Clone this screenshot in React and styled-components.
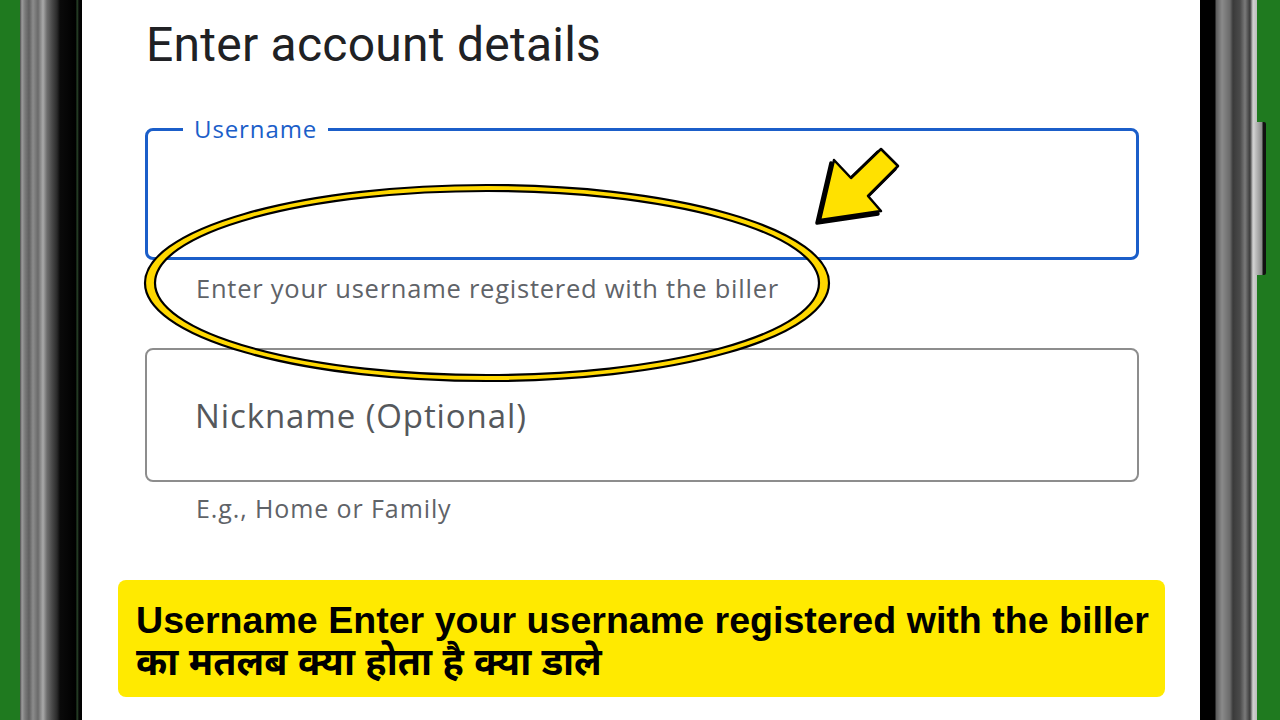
import React from 'react';
import styled, { createGlobalStyle } from 'styled-components';

const GlobalStyle = createGlobalStyle`
  html, body {
    margin: 0;
    padding: 0;
    width: 1280px;
    height: 720px;
    overflow: hidden;
    background: #1f7a1f;
  }
  #root { height: 720px; }
  * { box-sizing: border-box; }
`;

const headFont = `Roboto, "Noto Sans", Arial, sans-serif`;
const bodyFont = `"Open Sans", "Noto Sans", Arial, sans-serif`;

const Stage = styled.div`
  display: flex;
  height: 720px;
  padding-left: 20px;
  background: #1f7a1f;
`;

const LeftBezel = styled.div`
  flex: none;
  width: 62px;
  background: linear-gradient(
    to right,
    #4d4d4d 0px,
    #9c9c9c 2px,
    #7a7a7a 5px,
    #5f5f5f 9px,
    #8c8c8c 13px,
    #6a6a6a 18px,
    #a9a9a9 23px,
    #6d6d6d 27px,
    #4a4a4a 32px,
    #2a2a2a 37px,
    #0a0a0a 40px,
    #000 56px,
    #2c4a2c 57px,
    #050505 59px,
    #000 62px
  );
`;

const RightBezel = styled.div`
  position: relative;
  flex: none;
  width: 57px;
  background: linear-gradient(
    to right,
    #000 0px,
    #000 15px,
    #5a5a5a 16px,
    #8a8a8a 22px,
    #6a6a6a 30px,
    #3a3a3a 33px,
    #4a4a4a 40px,
    #7a7a7a 45px,
    #3a3a3a 50px,
    #d2d2d2 53px,
    #bdbdbd 57px
  );
`;

const SideButton = styled.div`
  position: absolute;
  left: calc(100% - 2px);
  top: 122px;
  width: 11px;
  height: 153px;
  border-radius: 0 2px 2px 0;
  background: linear-gradient(to right, #c4c4c4 0, #8a8a8a 7px, #111 8px, #111 11px);
`;

const Screen = styled.main`
  position: relative;
  flex: none;
  width: 1118px;
  height: 720px;
  background: #fff;
  padding: 0 35px 0 36px;
  display: flex;
  flex-direction: column;
`;

const Form = styled.section`
  display: flex;
  flex-direction: column;
  padding: 0 26px 0 27px;
`;

const Heading = styled.h1`
  margin: 0;
  padding: 17px 0 0 1px;
  font-family: ${headFont};
  font-weight: 400;
  font-size: 48px;
  line-height: 56px;
  letter-spacing: 0.25px;
  color: #202124;
`;

const Field = styled.fieldset`
  margin: ${(p) => p.$top}px 0 0 0;
  min-width: 0;
  padding: 0 0 0 35px;
  border: ${(p) => (p.$focused ? '3px solid #1b5ec9' : '2px solid #8d8d8d')};
  border-radius: 8px;
`;

const Legend = styled.legend`
  padding: 0 11px;
  font-family: ${bodyFont};
  font-size: 24px;
  line-height: 24px;
  letter-spacing: 0.9px;
  color: #1b5ec9;
`;

const InputArea = styled.div`
  height: ${(p) => p.$h}px;
  display: flex;
  align-items: center;
  padding-left: ${(p) => p.$indent}px;
  font-family: ${bodyFont};
  font-size: 33px;
  letter-spacing: 0.9px;
  color: #55585c;
`;

const Helper = styled.p`
  margin: ${(p) => p.$top}px 0 0 51px;
  font-family: ${bodyFont};
  font-size: ${(p) => p.$size}px;
  line-height: 30px;
  letter-spacing: ${(p) => p.$track}px;
  color: #5f6368;
`;

const Banner = styled.div`
  margin-top: 57px;
  height: 117px;
  padding: 19px 12px 0 18px;
  background: #ffea00;
  border-radius: 8px;
  font-family: "Liberation Sans", Arial, "Noto Sans Devanagari", "Lohit Devanagari", "Noto Sans", sans-serif;
  font-weight: 700;
  font-size: 37.6px;
  line-height: 42px;
  color: #000;
  white-space: nowrap;
`;

const BannerLine = styled.div``;

const Overlay = styled.svg`
  position: absolute;
  left: 0;
  top: 0;
  pointer-events: none;
`;

function ring(cx, cy, rx, ry) {
  return `M${cx - rx},${cy} a${rx},${ry} 0 1,0 ${2 * rx},0 a${rx},${ry} 0 1,0 ${-2 * rx},0 Z`;
}

const arrowPts = [
  [820, 220],
  [834, 160],
  [851, 178],
  [881, 149],
  [898, 166],
  [868, 196],
  [881, 211],
];

function HighlightMarks() {
  const pts = arrowPts.map(([x, y]) => `${x},${y}`).join(' ');
  const shadow = arrowPts.map(([x, y]) => `${x - 3},${y + 3}`).join(' ');
  return (
    <Overlay width="1118" height="720" viewBox="82 0 1118 720">
      <path
        d={`${ring(487, 283, 342, 98)} ${ring(487, 283, 332, 92)}`}
        fillRule="evenodd"
        fill="#ffd800"
        stroke="#000"
        strokeWidth="2.2"
      />
      <polygon points={shadow} fill="#000" stroke="#000" strokeWidth="3.5" strokeLinejoin="round" />
      <polygon points={pts} fill="#ffe100" stroke="#000" strokeWidth="2.5" strokeLinejoin="round" />
    </Overlay>
  );
}

export default function App() {
  return (
    <>
      <GlobalStyle />
      <Stage>
        <LeftBezel />
        <Screen>
          <Form>
            <Heading>Enter account details</Heading>
            <Field $focused $top={44}>
              <Legend>Username</Legend>
              <InputArea $h={116} $indent={0} />
            </Field>
            <Helper $top={13} $size={25.5} $track={0.75}>
              Enter your username registered with the biller
            </Helper>
            <Field $top={45}>
              <InputArea $h={130} $indent={13}>Nickname (Optional)</InputArea>
            </Field>
            <Helper $top={11} $size={25} $track={0.9}>
              E.g., Home or Family
            </Helper>
          </Form>
          <Banner>
            <BannerLine>Username Enter your username registered with the biller</BannerLine>
            <BannerLine>का मतलब क्या होता है क्या डाले</BannerLine>
          </Banner>
          <HighlightMarks />
        </Screen>
        <RightBezel>
          <SideButton />
        </RightBezel>
      </Stage>
    </>
  );
}
